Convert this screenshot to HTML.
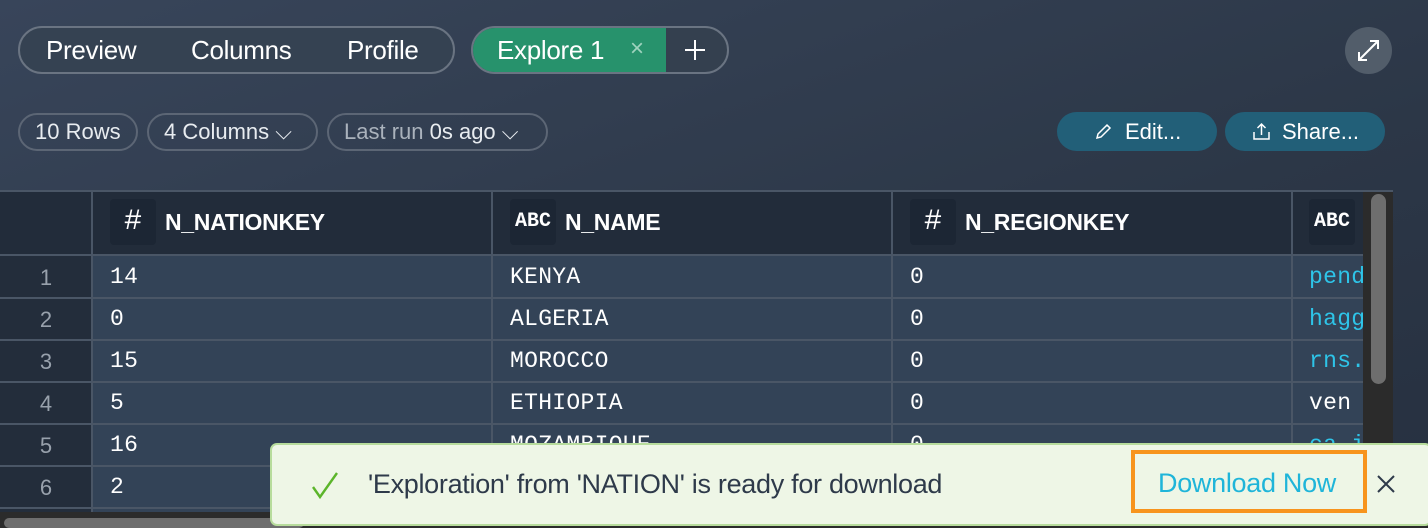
<!DOCTYPE html>
<html><head><style>
*{box-sizing:border-box;margin:0;padding:0}
body{width:1428px;height:528px;overflow:hidden;position:relative;font-family:"Liberation Sans",sans-serif;background:linear-gradient(160deg,#38455a 0%,#2c3747 60%,#263040 100%);color:#fff}
.abs{position:absolute}
.pill{position:absolute;border:2px solid #6a7482;border-radius:26px}
.tab{position:absolute;font-size:26px;top:35px;letter-spacing:-0.3px}
.chip{position:absolute;top:113px;height:38px;border:2px solid #5c6675;border-radius:19px;font-size:22px;line-height:34px;padding-left:15px;color:#e8ecf0}
.btn{position:absolute;top:112px;height:39px;border-radius:20px;background:#225f78;font-size:22px;line-height:39px;color:#fff}
.cell{position:absolute;font-family:"Liberation Mono",monospace;font-size:23px;letter-spacing:0.3px}
.idx{position:absolute;left:0;width:92px;text-align:center;color:#98a1ac;font-family:"Liberation Sans",sans-serif;font-size:22px}
.hicon{position:absolute;top:199px;width:46px;height:46px;background:#1c2634;border-radius:4px;font-family:"Liberation Mono",monospace;font-weight:bold;text-align:center;line-height:46px}
.hname{position:absolute;top:209px;font-size:23px;font-weight:bold;letter-spacing:-0.3px}
</style></head><body>
<div class="pill" style="left:18px;top:26px;width:437px;height:48px;background:#354252"></div>
<div class="tab" style="left:46px">Preview</div>
<div class="tab" style="left:191px">Columns</div>
<div class="tab" style="left:347px">Profile</div>
<div class="pill" style="left:471px;top:26px;width:258px;height:48px;background:#34404f;overflow:hidden"><div style="position:absolute;left:0;top:0;width:193px;height:44px;background:#27926c"></div></div>
<div class="tab" style="left:497px">Explore 1</div>
<div class="abs" style="left:630px;top:35px;font-size:24px;color:#9fd3be">×</div>
<svg class="abs" style="left:684px;top:39px" width="22" height="22" viewBox="0 0 22 22" stroke="#fff" stroke-width="2"><path d="M11 1v20M1 11h20"/></svg>
<div class="abs" style="left:1345px;top:27px;width:47px;height:47px;border-radius:50%;background:#525d6a"></div>
<svg class="abs" style="left:1355px;top:37px" width="27" height="27" viewBox="0 0 27 27" fill="none" stroke="#fff" stroke-width="2"><path d="M4 23L23 4M15 4h8v8M4 15v8h8"/></svg>

<div class="chip" style="left:18px;width:120px">10 Rows</div>
<div class="chip" style="left:147px;width:171px">4 Columns ⌵</div>
<div class="chip" style="left:327px;width:221px"><span style="color:#aab2bc">Last run</span> 0s ago ⌵</div>
<div class="btn" style="left:1057px;width:160px"><svg style="position:absolute;left:38px;top:11px" width="17" height="17" viewBox="0 0 17 17" fill="none" stroke="#fff" stroke-width="1.5"><path d="M2 15l1-4L12 2l3 3-9 9z"/></svg><span style="margin-left:68px">Edit...</span></div>
<div class="btn" style="left:1225px;width:160px"><svg style="position:absolute;left:27px;top:10px" width="19" height="19" viewBox="0 0 19 19" fill="none" stroke="#fff" stroke-width="1.5"><path d="M2 10v7h15v-7M9.5 13V2M5.5 6l4-4 4 4"/></svg><span style="margin-left:57px">Share...</span></div>

<div class="abs" style="left:0;top:190px;width:1393px;height:2px;background:#4a5666"></div>
<div class="abs" style="left:0;top:192px;width:1363px;height:62px;background:#222c3a"></div>
<div class="abs" style="left:92px;top:255px;width:1271px;height:260px;background:#334357"></div>
<div class="abs" style="left:0;top:255px;width:92px;height:260px;background:#232d3b"></div>
<div class="abs" style="left:0;top:254px;width:1363px;height:2px;background:#4a5666"></div>
<div class="abs" style="left:0;top:297px;width:1363px;height:2px;background:#4a5666"></div>
<div class="abs" style="left:0;top:339px;width:1363px;height:2px;background:#4a5666"></div>
<div class="abs" style="left:0;top:381px;width:1363px;height:2px;background:#4a5666"></div>
<div class="abs" style="left:0;top:423px;width:1363px;height:2px;background:#4a5666"></div>
<div class="abs" style="left:0;top:465px;width:1363px;height:2px;background:#4a5666"></div>
<div class="abs" style="left:0;top:507px;width:1363px;height:2px;background:#4a5666"></div>
<div class="abs" style="left:91px;top:192px;width:2px;height:320px;background:#4a5666"></div>
<div class="abs" style="left:491px;top:192px;width:2px;height:320px;background:#4a5666"></div>
<div class="abs" style="left:891px;top:192px;width:2px;height:320px;background:#4a5666"></div>
<div class="abs" style="left:1291px;top:192px;width:2px;height:320px;background:#4a5666"></div>

<div class="hicon" style="left:110px;font-size:30px;font-weight:normal">#</div><div class="hname" style="left:165px">N_NATIONKEY</div>
<div class="hicon" style="left:510px;font-size:20px">ABC</div><div class="hname" style="left:565px">N_NAME</div>
<div class="hicon" style="left:910px;font-size:30px;font-weight:normal">#</div><div class="hname" style="left:965px">N_REGIONKEY</div>
<div class="hicon" style="left:1309px;font-size:20px">ABC</div>

<div class="idx" style="top:265px">1</div><div class="cell" style="left:110px;top:264px">14</div><div class="cell" style="left:510px;top:264px">KENYA</div><div class="cell" style="left:910px;top:264px">0</div><div class="cell" style="left:1309px;top:264px;color:#2ec4e8">pend</div>
<div class="idx" style="top:307px">2</div><div class="cell" style="left:110px;top:306px">0</div><div class="cell" style="left:510px;top:306px">ALGERIA</div><div class="cell" style="left:910px;top:306px">0</div><div class="cell" style="left:1309px;top:306px;color:#2ec4e8">hagg</div>
<div class="idx" style="top:349px">3</div><div class="cell" style="left:110px;top:348px">15</div><div class="cell" style="left:510px;top:348px">MOROCCO</div><div class="cell" style="left:910px;top:348px">0</div><div class="cell" style="left:1309px;top:348px;color:#2ec4e8">rns.</div>
<div class="idx" style="top:391px">4</div><div class="cell" style="left:110px;top:390px">5</div><div class="cell" style="left:510px;top:390px">ETHIOPIA</div><div class="cell" style="left:910px;top:390px">0</div><div class="cell" style="left:1309px;top:390px">ven</div>
<div class="idx" style="top:433px">5</div><div class="cell" style="left:110px;top:432px">16</div><div class="cell" style="left:510px;top:432px">MOZAMBIQUE</div><div class="cell" style="left:910px;top:432px">0</div><div class="cell" style="left:1309px;top:432px;color:#2ec4e8">ca i</div>
<div class="idx" style="top:475px">6</div><div class="cell" style="left:110px;top:474px">2</div>

<div class="abs" style="left:1363px;top:192px;width:30px;height:320px;background:#2b2b2b"></div>
<div class="abs" style="left:1371px;top:194px;width:15px;height:190px;border-radius:8px;background:#6e6e6e"></div>
<div class="abs" style="left:0;top:512px;width:1428px;height:16px;background:#2b2b2b"></div>
<div class="abs" style="left:4px;top:518px;width:300px;height:10px;border-radius:5px;background:#6e6e6e"></div>

<div class="abs" style="left:270px;top:443px;width:1162px;height:83px;background:#eef6e6;border:2px solid #b7dc9c;border-radius:7px"></div>
<svg class="abs" style="left:310px;top:470px" width="30" height="30" viewBox="0 0 30 30" fill="none" stroke="#5bb52a" stroke-width="2.4"><path d="M3 17l7 10L27 3"/></svg>
<div class="abs" style="left:368px;top:469px;font-size:27px;color:#2e3a4a;letter-spacing:-0.3px">'Exploration' from 'NATION' is ready for download</div>
<div class="abs" style="left:1131px;top:450px;width:236px;height:63px;border:4px solid #f7941d"></div>
<div class="abs" style="left:1158px;top:468px;font-size:27px;color:#1fb5d9;letter-spacing:-0.3px">Download Now</div>
<svg class="abs" style="left:1376px;top:474px" width="20" height="20" viewBox="0 0 20 20" stroke="#2e3a4a" stroke-width="2"><path d="M2 2l16 16M18 2L2 18"/></svg>
</body></html>
